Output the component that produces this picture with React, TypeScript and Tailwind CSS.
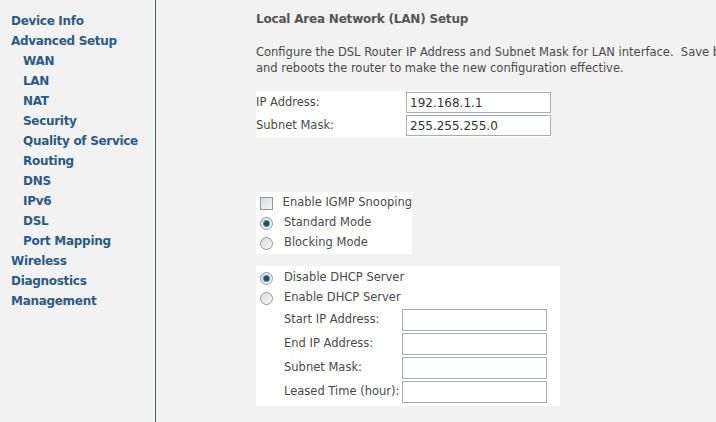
const navItems: { label: string; sub?: boolean }[] = [
  { label: 'Device Info' },
  { label: 'Advanced Setup' },
  { label: 'WAN', sub: true },
  { label: 'LAN', sub: true },
  { label: 'NAT', sub: true },
  { label: 'Security', sub: true },
  { label: 'Quality of Service', sub: true },
  { label: 'Routing', sub: true },
  { label: 'DNS', sub: true },
  { label: 'IPv6', sub: true },
  { label: 'DSL', sub: true },
  { label: 'Port Mapping', sub: true },
  { label: 'Wireless' },
  { label: 'Diagnostics' },
  { label: 'Management' },
];

const Radio = ({ checked }: { checked?: boolean }) => (
  <span className="flex h-[13px] w-[13px] items-center justify-center rounded-full border border-[#8e9aa6] bg-gradient-to-br from-[#d8dde2] to-[#f8f8f8]">
    {checked && <span className="h-[5px] w-[5px] rounded-full bg-[#1e4d5c] ring-1 ring-[#5f8f9c]" />}
  </span>
);

const Checkbox = () => (
  <span className="block h-[13px] w-[13px] border border-[#8e9aa6] bg-gradient-to-br from-[#d6dadf] to-[#f6f6f6]" />
);

const TextInput = ({ value = '', w = 'w-[145px]' }: { value?: string; w?: string }) => (
  <div className={`flex h-[21px] items-center border border-[#a5acb2] bg-white px-[3px] text-[12px] text-[#333] ${w}`}>
    {value}
  </div>
);

export default function App() {
  return (
    <div className="flex h-[422px] w-[716px] overflow-hidden bg-[#f2f2f2] font-['DejaVu_Sans',sans-serif] text-[#4a4a4a]">
      <nav className="w-[156px] shrink-0 border-r border-[#3f5f80] pt-[11px]">
        {navItems.map((item) => (
          <div
            key={item.label}
            className={`h-[20px] text-[12px] font-bold leading-[20px] tracking-[-0.3px] text-[#2b5a85] ${item.sub ? 'pl-[23px]' : 'pl-[11px]'}`}
          >
            {item.label}
          </div>
        ))}
      </nav>

      <main className="flex-1 overflow-hidden pl-[100px] pt-[11px] text-[11.5px] whitespace-nowrap">
        <h1 className="text-[12px] font-bold leading-[17px] tracking-[-0.2px] text-[#555]">Local Area Network (LAN) Setup</h1>

        <p className="mt-[16px] leading-[16px]">
          Configure the DSL Router IP Address and Subnet Mask for LAN interface.&nbsp; Save b
          <br />
          and reboots the router to make the new configuration effective.
        </p>

        <div className="mt-[15px] w-[295px] bg-white">
          <div className="flex h-[23px] items-center">
            <span className="w-[150px]">IP Address:</span>
            <TextInput value="192.168.1.1" />
          </div>
          <div className="flex h-[23px] items-center">
            <span className="w-[150px]">Subnet Mask:</span>
            <TextInput value="255.255.255.0" />
          </div>
        </div>

        <div className="mt-[55px] w-[156px] bg-white py-[1px]">
          <div className="flex h-[20px] items-center">
            <span className="w-[28px] pl-[4px]"><Checkbox /></span>
            <span>Enable IGMP Snooping</span>
          </div>
          <div className="flex h-[20px] items-center">
            <span className="w-[28px] pl-[4px]"><Radio checked /></span>
            <span>Standard Mode</span>
          </div>
          <div className="flex h-[20px] items-center">
            <span className="w-[28px] pl-[4px]"><Radio /></span>
            <span>Blocking Mode</span>
          </div>
        </div>

        <div className="mt-[12px] w-[304px] bg-white pt-[2px] pb-[2px]">
          <div className="flex h-[20px] items-center">
            <span className="w-[28px] pl-[4px]"><Radio checked /></span>
            <span>Disable DHCP Server</span>
          </div>
          <div className="flex h-[20px] items-center">
            <span className="w-[28px] pl-[4px]"><Radio /></span>
            <span>Enable DHCP Server</span>
          </div>
          {['Start IP Address:', 'End IP Address:', 'Subnet Mask:', 'Leased Time (hour):'].map((label) => (
            <div key={label} className="flex h-[24px] items-center pl-[28px]">
              <span className="w-[118px] overflow-hidden">{label}</span>
              <TextInput w="w-[145px] h-[22px]" />
            </div>
          ))}
        </div>
      </main>
    </div>
  );
}
